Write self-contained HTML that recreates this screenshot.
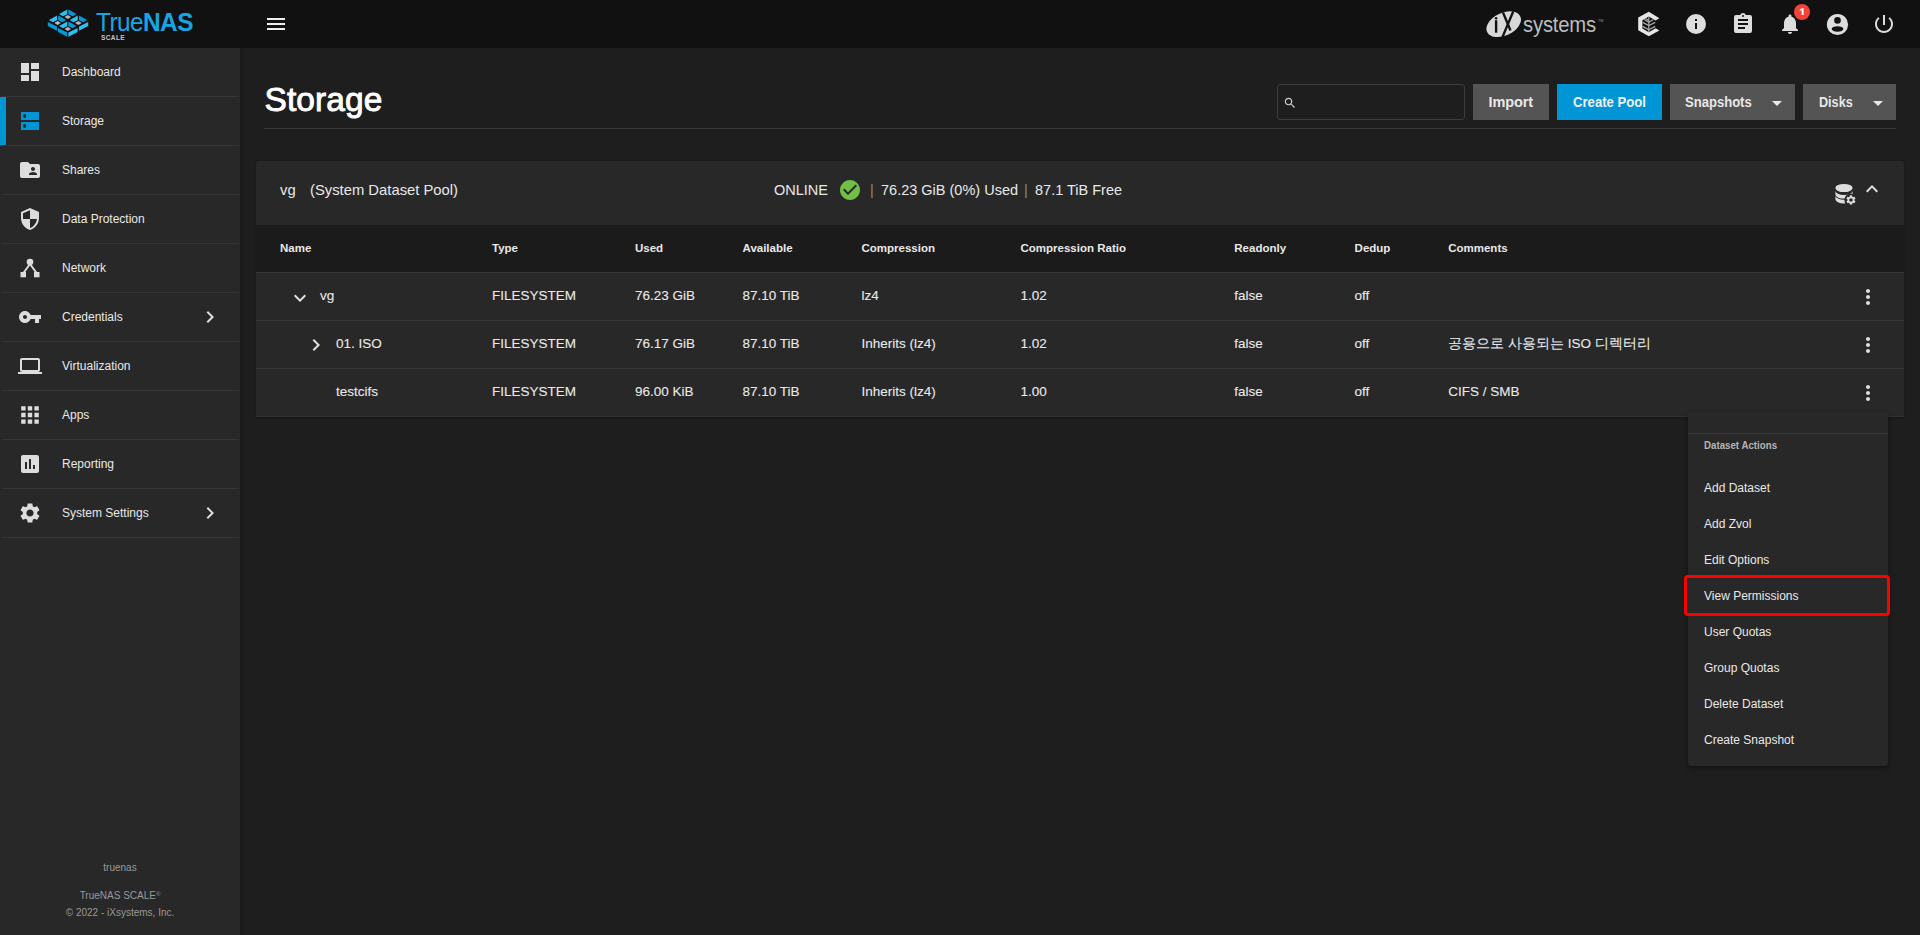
<!DOCTYPE html>
<html><head><meta charset="utf-8"><title>Storage - TrueNAS</title>
<style>
html,body{margin:0;padding:0;width:1920px;height:935px;overflow:hidden;background:#1e1e1e;font-family:"Liberation Sans",sans-serif;}
.t{position:absolute;line-height:1;white-space:nowrap;}
.r{position:absolute;}
.i{position:absolute;overflow:visible;}
</style></head><body>
<div class="r" style="left:0px;top:0px;width:1920px;height:48px;background:#111111;"></div>
<svg class="i" style="left:48px;top:9px" width="40" height="28" viewBox="0 0 40 28"><polygon points="11.10,4.90 19.20,0.60 19.20,5.20 15.00,7.20" fill="#2cbff2"/><polygon points="28.50,4.90 20.40,0.60 20.40,5.20 24.60,7.20" fill="#0598d8"/><polygon points="0.90,10.90 9.00,6.60 9.00,11.20 4.80,13.20" fill="#2cbff2"/><polygon points="18.30,10.90 10.20,6.60 10.20,11.20 14.40,13.20" fill="#0598d8"/><polygon points="-0.20,13.00 -0.20,17.10 9.00,21.80 9.00,17.60" fill="#0598d8"/><polygon points="21.70,10.90 29.80,6.60 29.80,11.20 25.60,13.20" fill="#2cbff2"/><polygon points="39.10,10.90 31.00,6.60 31.00,11.20 35.20,13.20" fill="#0598d8"/><polygon points="40.20,13.00 40.20,17.10 31.00,21.80 31.00,17.60" fill="#2cbff2"/><polygon points="11.10,16.90 19.20,12.60 19.20,17.20 15.00,19.20" fill="#2cbff2"/><polygon points="28.50,16.90 20.40,12.60 20.40,17.20 24.60,19.20" fill="#0598d8"/><polygon points="10.00,19.00 10.00,23.10 19.20,27.80 19.20,23.60" fill="#0598d8"/><polygon points="29.60,19.00 29.60,23.10 20.40,27.80 20.40,23.60" fill="#2cbff2"/><polygon points="19.8,5.9 23.1,8 19.8,10.1 16.5,8" fill="#b8b8b8"/><polygon points="9.6,11.9 12.899999999999999,14 9.6,16.1 6.3,14" fill="#b8b8b8"/><polygon points="30.4,11.9 33.699999999999996,14 30.4,16.1 27.099999999999998,14" fill="#b8b8b8"/><polygon points="19.8,17.9 23.1,20 19.8,22.1 16.5,20" fill="#b8b8b8"/></svg>
<div class="t" style="left:95.5px;top:9.27px;font-size:26.5px;color:#17a6e4;font-weight:400;letter-spacing:-0.6px;transform:scaleX(0.92);transform-origin:0 0">True<b>NAS</b></div>
<div class="t" style="left:101px;top:34.50px;font-size:6.5px;color:#c8c8c8;font-weight:700;letter-spacing:0.4px">SCALE</div>
<div class="r" style="left:267px;top:18px;width:18px;height:2px;background:#eeeeee;"></div>
<div class="r" style="left:267px;top:23px;width:18px;height:2px;background:#eeeeee;"></div>
<div class="r" style="left:267px;top:28px;width:18px;height:2px;background:#eeeeee;"></div>
<svg class="i" style="left:1684px;top:12px;" width="24" height="24" viewBox="0 0 24 24"><path fill="#dddddd" d="M13,9H11V7H13M13,17H11V11H13M12,2A10,10 0 0,0 2,12A10,10 0 0,0 12,22A10,10 0 0,0 22,12A10,10 0 0,0 12,2Z"/></svg>
<svg class="i" style="left:1731px;top:12px;" width="24" height="24" viewBox="0 0 24 24"><path fill="#dddddd" d="M17,9H7V7H17M17,13H7V11H17M14,17H7V15H14M12,3A1,1 0 0,1 13,4A1,1 0 0,1 12,5A1,1 0 0,1 11,4A1,1 0 0,1 12,3M19,3H14.82C14.4,1.84 13.3,1 12,1C10.7,1 9.6,1.84 9.18,3H5A2,2 0 0,0 3,5V19A2,2 0 0,0 5,21H19A2,2 0 0,0 21,19V5A2,2 0 0,0 19,3Z"/></svg>
<svg class="i" style="left:1778px;top:12px;" width="24" height="24" viewBox="0 0 24 24"><path fill="#dddddd" d="M12 22c1.1 0 2-.9 2-2h-4c0 1.1.89 2 2 2zm6-6v-5c0-3.07-1.64-5.64-4.5-6.32V4c0-.83-.67-1.5-1.5-1.5s-1.5.67-1.5 1.5v.68C7.63 5.36 6 7.920 6 11v5l-2 2v1h16v-1l-2-2z"/></svg>
<svg class="i" style="left:1872px;top:12px;" width="24" height="24" viewBox="0 0 24 24"><path fill="#dddddd" d="M13 3h-2v10h2V3zm4.83 2.17l-1.42 1.42C17.99 7.86 19 9.81 19 12c0 3.87-3.13 7-7 7s-7-3.130-7-7c0-2.19 1.01-4.14 2.58-5.42L6.17 5.17C4.23 6.82 3 9.26 3 12c0 4.97 4.03 9 9 9s9-4.03 9-9c0-2.74-1.23-5.18-3.17-6.83z"/></svg>
<svg class="i" style="left:1632px;top:8px" width="32" height="32" viewBox="0 0 32 32">
<path fill="#e6e6e6" d="M16.8,3.8 L27.4,10.2 L23.6,12.5 L16.8,8.4 L10.4,12.3 L10.4,20.4 L16.8,24.2 L23.6,20.2 L27.4,22.4 L16.8,28.2 L6.2,22.2 L6.2,9.6 Z"/>
<g stroke="#a8a8a8" stroke-width="1.2" fill="none">
<path d="M16.8,8.4 V24.2"/><path d="M10.6,14.4 L16.8,17.6 L23.2,14.4"/><path d="M10.6,18.4 L16.8,21.8 L23.2,18.4"/>
<path d="M12.2,11.6 L16.8,14.2 L21.4,11.6 M13.5,10.4 L16.8,12.4"/>
</g></svg>
<svg class="i" style="left:1825px;top:12px" width="24" height="24" viewBox="0 0 24 24">
<circle cx="12.5" cy="12.5" r="10.6" fill="#dddddd"/><circle cx="12.5" cy="8.4" r="3.3" fill="#111"/><ellipse cx="12.5" cy="17" rx="5.8" ry="2.7" fill="#111"/></svg>
<div class="r" style="left:1794px;top:4px;width:16px;height:16px;background:#f44336;border-radius:50%"></div>
<svg class="i" style="left:1790px;top:0px" width="25" height="24" viewBox="0 0 25 24"><path d="M11.6 8.2 H13.6 V14.9 H11.7 V10.2 L9.8 10.8 V9.4 Z" fill="#ffffff"/></svg>
<svg class="i" style="left:1484px;top:8px" width="40" height="32" viewBox="0 0 40 32">
<ellipse cx="19.7" cy="16.2" rx="18.3" ry="11.3" transform="rotate(-25 19.7 16.2)" fill="#d8d8d8"/>
<rect x="10.9" y="12.2" width="2.4" height="12.5" fill="#111"/><circle cx="12.1" cy="10.3" r="1.3" fill="#111"/>
<path d="M18.3,29.5 L29.2,3.5" stroke="#111" stroke-width="2.3"/><path d="M19,4.5 L26.5,22.5" stroke="#111" stroke-width="2.3"/>
</svg>
<div class="t" style="left:1523px;top:13.65px;font-size:22.5px;color:#bcbcbc;font-weight:400;letter-spacing:-0.2px;transform:scaleX(0.9);transform-origin:0 0">systems</div>
<div class="t" style="left:1598px;top:19.75px;font-size:3.6px;color:#999999;font-weight:400;">TM</div>
<div class="r" style="left:0px;top:48px;width:240px;height:887px;background:#282828;"></div>
<div class="r" style="left:240px;top:48px;width:3px;height:887px;background:linear-gradient(90deg,#191919,#1e1e1e);"></div>
<div class="r" style="left:2px;top:96px;width:237px;height:1px;background:#353535;"></div>
<svg class="i" style="left:18px;top:60px;" width="24" height="24" viewBox="0 0 24 24"><path fill="#dddddd" d="M3 13h8V3H3v10zm0 8h8v-6H3v6zm10 0h8V11h-8v10zm0-18v6h8V3h-8z"/></svg>
<div class="t" style="left:62px;top:65.64px;font-size:12px;color:#e8e8e8;font-weight:400;">Dashboard</div>
<div class="r" style="left:2px;top:145px;width:237px;height:1px;background:#353535;"></div>
<div class="r" style="left:21px;top:112px;width:18px;height:8px;background:#0095d5;"></div>
<div class="r" style="left:21px;top:122px;width:18px;height:8px;background:#0095d5;"></div>
<div class="r" style="left:23px;top:114.3px;width:3.4px;height:3.4px;background:#282828;border-radius:50%"></div>
<div class="r" style="left:23px;top:124.3px;width:3.4px;height:3.4px;background:#282828;border-radius:50%"></div>
<div class="t" style="left:62px;top:114.64px;font-size:12px;color:#e8e8e8;font-weight:400;">Storage</div>
<div class="r" style="left:2px;top:194px;width:237px;height:1px;background:#353535;"></div>
<svg class="i" style="left:18px;top:158px;" width="24" height="24" viewBox="0 0 24 24"><path fill="#dddddd" d="M20 6h-8l-2-2H4c-1.1 0-1.99.9-1.99 2L2 18c0 1.1.9 2 2 2h16c1.1 0 2-.9 2-2V8c0-1.1-.9-2-2-2zm-5 3c1.1 0 2 .9 2 2s-.9 2-2 2-2-.9-2-2 .9-2 2-2zm4 8h-8v-1c0-1.33 2.67-2 4-2s4 .67 4 2v1z"/></svg>
<div class="t" style="left:62px;top:163.64px;font-size:12px;color:#e8e8e8;font-weight:400;">Shares</div>
<div class="r" style="left:2px;top:243px;width:237px;height:1px;background:#353535;"></div>
<svg class="i" style="left:18px;top:207px;" width="24" height="24" viewBox="0 0 24 24"><path fill="#dddddd" d="M12 1L3 5v6c0 5.55 3.84 10.74 9 12 5.16-1.26 9-6.45 9-12V5l-9-4zm0 10.99h7c-.53 4.12-3.28 7.79-7 8.94V12H5V6.3l7-3.11v8.8z"/></svg>
<div class="t" style="left:62px;top:212.64px;font-size:12px;color:#e8e8e8;font-weight:400;">Data Protection</div>
<div class="r" style="left:2px;top:292px;width:237px;height:1px;background:#353535;"></div>
<div class="t" style="left:62px;top:261.64px;font-size:12px;color:#e8e8e8;font-weight:400;">Network</div>
<div class="r" style="left:2px;top:341px;width:237px;height:1px;background:#353535;"></div>
<svg class="i" style="left:18px;top:305px;" width="24" height="24" viewBox="0 0 24 24"><path fill="#dddddd" d="M12.65 10C11.83 7.67 9.61 6 7 6c-3.31 0-6 2.69-6 6s2.69 6 6 6c2.61 0 4.83-1.67 5.65-4H17v4h4v-4h2v-4H12.65zM7 14c-1.1 0-2-.9-2-2s.9-2 2-2 2 .9 2 2-.9 2-2 2z"/></svg>
<div class="t" style="left:62px;top:310.64px;font-size:12px;color:#e8e8e8;font-weight:400;">Credentials</div>
<svg class="i" style="left:198px;top:305px;" width="24" height="24" viewBox="0 0 24 24"><path fill="#dddddd" d="M10 6L8.59 7.41 13.17 12l-4.58 4.59L10 18l6-6z"/></svg>
<div class="r" style="left:2px;top:390px;width:237px;height:1px;background:#353535;"></div>
<svg class="i" style="left:18px;top:354px;" width="24" height="24" viewBox="0 0 24 24"><path fill="#dddddd" d="M20 18c1.1 0 1.99-.9 1.99-2L22 6c0-1.1-.9-2-2-2H4c-1.1 0-2 .9-2 2v10c0 1.1.9 2 2 2H0v2h24v-2h-4zM4 6h16v10H4V6z"/></svg>
<div class="t" style="left:62px;top:359.64px;font-size:12px;color:#e8e8e8;font-weight:400;">Virtualization</div>
<div class="r" style="left:2px;top:439px;width:237px;height:1px;background:#353535;"></div>
<svg class="i" style="left:18px;top:403px;transform:scale(1.1)" width="24" height="24" viewBox="0 0 24 24"><path fill="#dddddd" d="M4 8h4V4H4v4zm6 12h4v-4h-4v4zm-6 0h4v-4H4v4zm0-6h4v-4H4v4zm6 0h4v-4h-4v4zm6-10v4h4V4h-4zm-6 4h4V4h-4v4zm6 6h4v-4h-4v4zm0 6h4v-4h-4v4z"/></svg>
<div class="t" style="left:62px;top:408.64px;font-size:12px;color:#e8e8e8;font-weight:400;">Apps</div>
<div class="r" style="left:2px;top:488px;width:237px;height:1px;background:#353535;"></div>
<svg class="i" style="left:18px;top:452px;" width="24" height="24" viewBox="0 0 24 24"><path fill="#dddddd" d="M19 3H5c-1.1 0-2 .9-2 2v14c0 1.1.9 2 2 2h14c1.1 0 2-.9 2-2V5c0-1.1-.9-2-2-2zM9 17H7v-7h2v7zm4 0h-2V7h2v10zm4 0h-2v-4h2v4z"/></svg>
<div class="t" style="left:62px;top:457.64px;font-size:12px;color:#e8e8e8;font-weight:400;">Reporting</div>
<div class="r" style="left:2px;top:537px;width:237px;height:1px;background:#353535;"></div>
<svg class="i" style="left:18px;top:501px;" width="24" height="24" viewBox="0 0 24 24"><path fill="#dddddd" d="M19.14 12.94c.04-.3.06-.61.06-.94 0-.32-.02-.64-.07-.94l2.03-1.58c.18-.14.23-.41.12-.61l-1.92-3.32c-.12-.22-.37-.29-.59-.22l-2.39.96c-.5-.38-1.03-.7-1.62-.94l-.36-2.54c-.04-.24-.24-.41-.48-.41h-3.84c-.24 0-.43.17-.47.41l-.36 2.54c-.59.24-1.13.57-1.62.94l-2.39-.96c-.22-.08-.47 0-.59.22L2.74 8.87c-.12.21-.08.47.12.61l2.03 1.58c-.05.3-.09.63-.09.94s.02.64.07.94l-2.03 1.58c-.18.14-.23.41-.12.61l1.92 3.32c.12.22.37.29.59.22l2.39-.96c.5.38 1.030.7 1.62.94l.36 2.54c.05.24.24.41.48.41h3.84c.24 0 .44-.17.47-.41l.36-2.54c.59-.24 1.13-.56 1.62-.94l2.39.96c.22.08.47 0 .59-.22l1.92-3.32c.12-.22.07-.47-.12-.61l-2.01-1.58zM12 15.6c-1.98 0-3.6-1.62-3.6-3.6s1.62-3.6 3.6-3.6 3.6 1.62 3.6 3.6-1.62 3.6-3.6 3.6z"/></svg>
<div class="t" style="left:62px;top:506.64px;font-size:12px;color:#e8e8e8;font-weight:400;">System Settings</div>
<svg class="i" style="left:198px;top:501px;" width="24" height="24" viewBox="0 0 24 24"><path fill="#dddddd" d="M10 6L8.59 7.41 13.17 12l-4.58 4.59L10 18l6-6z"/></svg>
<div class="r" style="left:0px;top:97px;width:6px;height:48px;background:#0095d5;"></div>
<svg class="i" style="left:18px;top:256px" width="24" height="24" viewBox="0 0 24 24">
<circle cx="12" cy="6" r="3.3" fill="#dddddd"/><path d="M12 8 L5.8 16.5 M12 8 L18.2 16.5" stroke="#dddddd" stroke-width="2" fill="none"/>
<rect x="2.5" y="16" width="5.5" height="5.3" fill="#dddddd"/><rect x="16" y="16" width="5.5" height="5.3" fill="#dddddd"/></svg>
<div class="t" style="left:-80px;width:400px;text-align:center;top:863.28px;font-size:10px;color:#999999;font-weight:400;">truenas</div>
<div class="t" style="left:-80px;width:400px;text-align:center;top:890.78px;font-size:10px;color:#999999;font-weight:400;">TrueNAS SCALE<span style="font-size:6px;vertical-align:3px">&reg;</span></div>
<div class="t" style="left:-80px;width:400px;text-align:center;top:907.78px;font-size:10px;color:#999999;font-weight:400;">&copy; 2022 - iXsystems, Inc.</div>
<div class="t" style="left:264.5px;top:83.44px;font-size:33.5px;color:#ffffff;font-weight:400;-webkit-text-stroke:0.9px #ffffff;letter-spacing:0.1px">Storage</div>
<div class="r" style="left:264px;top:128px;width:1632px;height:1px;background:#3a3a3a;"></div>
<div class="r" style="left:1277px;top:84px;width:188px;height:36px;background:transparent;box-sizing:border-box;border:1px solid #3c3c3c;border-radius:3px"></div>
<svg class="i" style="left:1283px;top:96px;" width="14" height="14" viewBox="0 0 24 24"><path fill="#cccccc" d="M15.5 14h-.79l-.28-.27C15.41 12.59 16 11.11 16 9.5 16 5.91 13.09 3 9.5 3S3 5.91 3 9.5 5.91 16 9.5 16c1.61 0 3.09-.59 4.23-1.57l.27.28v.79l5 4.99L20.49 19l-4.99-5zm-6 0C7.01 14 5 11.99 5 9.5S7.01 5 9.5 5 14 7.01 14 9.5 11.99 14 9.5 14z"/></svg>
<div class="r" style="left:1473px;top:84px;width:76px;height:36px;background:#545454;"></div>
<div class="t" style="left:1488.5px;top:95.13px;font-size:14.5px;color:#e8e8e8;font-weight:700;transform:scaleX(1.0);transform-origin:0 0;letter-spacing:-0.1px">Import</div>
<div class="r" style="left:1557px;top:84px;width:105px;height:36px;background:#0095d5;"></div>
<div class="t" style="left:1573px;top:95.13px;font-size:14.5px;color:#f0f0f0;font-weight:700;transform:scaleX(0.905);transform-origin:0 0">Create Pool</div>
<div class="r" style="left:1670px;top:84px;width:125px;height:36px;background:#545454;"></div>
<div class="t" style="left:1685px;top:95.13px;font-size:14.5px;color:#e8e8e8;font-weight:700;transform:scaleX(0.9);transform-origin:0 0">Snapshots</div>
<div class="r" style="left:1803px;top:84px;width:93px;height:36px;background:#545454;"></div>
<div class="t" style="left:1819px;top:95.13px;font-size:14.5px;color:#e8e8e8;font-weight:700;transform:scaleX(0.87);transform-origin:0 0">Disks</div>
<svg class="i" style="left:1772px;top:101px" width="10" height="5" viewBox="0 0 10 5"><path d="M0 0L10 0L5 5z" fill="#e8e8e8"/></svg>
<svg class="i" style="left:1873px;top:101px" width="10" height="5" viewBox="0 0 10 5"><path d="M0 0L10 0L5 5z" fill="#e8e8e8"/></svg>
<div class="r" style="left:256px;top:161px;width:1648px;height:256px;background:#282828;border-radius:3px;box-shadow:0 1px 2px rgba(0,0,0,.35)"></div>
<div class="r" style="left:256px;top:416px;width:1648px;height:1px;background:#323232;"></div>
<div class="r" style="left:256px;top:225px;width:1648px;height:47px;background:#1b1b1b;"></div>
<div class="r" style="left:256px;top:272px;width:1648px;height:1px;background:#353535;"></div>
<div class="r" style="left:256px;top:320px;width:1648px;height:1px;background:#353535;"></div>
<div class="r" style="left:256px;top:368px;width:1648px;height:1px;background:#353535;"></div>
<div class="t" style="left:280px;top:182.67px;font-size:14.8px;color:#e8e8e8;font-weight:400;">vg</div>
<div class="t" style="left:310px;top:182.67px;font-size:14.8px;color:#e8e8e8;font-weight:400;">(System Dataset Pool)</div>
<div class="t" style="left:774px;top:182.93px;font-size:14.5px;color:#e8e8e8;font-weight:400;">ONLINE</div>
<svg class="i" style="left:837.5px;top:178px;" width="24" height="24" viewBox="0 0 24 24"><path fill="#71bf44" d="M12 2C6.5 2 2 6.5 2 12S6.5 22 12 22 22 17.5 22 12 17.5 2 12 2M10 17L5 12L6.41 10.59L10 14.17L17.59 6.58L19 8L10 17Z"/></svg>
<div class="t" style="left:870px;top:182.93px;font-size:14.5px;color:#888888;font-weight:400;">|</div>
<div class="t" style="left:881px;top:182.93px;font-size:14.5px;color:#e8e8e8;font-weight:400;">76.23 GiB (0%) Used</div>
<div class="t" style="left:1024px;top:182.93px;font-size:14.5px;color:#888888;font-weight:400;">|</div>
<div class="t" style="left:1035px;top:182.93px;font-size:14.5px;color:#e8e8e8;font-weight:400;">87.1 TiB Free</div>
<svg class="i" style="left:1831px;top:181px" width="24" height="24" viewBox="0 0 24 24">
<g fill="#dddddd"><ellipse cx="13" cy="7" rx="8.6" ry="4.1"/>
<path d="M4.4 9.9 v3.6 a8.6 4.1 0 0 0 17.2 0 v-3.6 a8.6 4.1 0 0 1 -17.2 0z"/>
<path d="M4.4 14.7 v3.6 a8.6 4.1 0 0 0 17.2 0 v-3.6 a8.6 4.1 0 0 1 -17.2 0z"/></g>
<circle cx="20" cy="19" r="6.6" fill="#282828"/>
<g transform="translate(14.2,13.2) scale(0.48)"><path fill="#dddddd" d="M19.14 12.94c.04-.3.06-.61.06-.94 0-.32-.02-.64-.07-.94l2.03-1.58c.18-.14.23-.41.12-.61l-1.92-3.32c-.12-.22-.37-.29-.59-.22l-2.39.96c-.5-.38-1.03-.7-1.62-.94l-.36-2.54c-.04-.24-.24-.41-.48-.41h-3.84c-.24 0-.43.17-.47.41l-.36 2.54c-.59.24-1.13.57-1.62.94l-2.39-.96c-.22-.08-.47 0-.59.22L2.74 8.87c-.12.21-.08.47.12.61l2.03 1.58c-.05.3-.09.63-.09.94s.02.64.07.94l-2.03 1.58c-.18.14-.23.41-.12.61l1.92 3.32c.12.22.37.29.59.22l2.39-.96c.5.38 1.030.7 1.62.94l.36 2.54c.05.24.24.41.48.41h3.84c.24 0 .44-.17.47-.41l.36-2.54c.59-.24 1.13-.56 1.62-.94l2.39.96c.22.08.47 0 .59-.22l1.92-3.32c.12-.22.07-.47-.12-.61l-2.01-1.58zM12 15.6c-1.98 0-3.6-1.62-3.6-3.6s1.62-3.6 3.6-3.6 3.6 1.62 3.6 3.6-1.62 3.6-3.6 3.6z"/></g>
</svg>
<svg class="i" style="left:1860px;top:177px;" width="24" height="24" viewBox="0 0 24 24"><path fill="#e0e0e0" d="M12 8l-6 6 1.41 1.41L12 10.83l4.59 4.58L18 14z"/></svg>
<div class="t" style="left:280px;top:243.07px;font-size:11.5px;color:#e8e8e8;font-weight:700;">Name</div>
<div class="t" style="left:492px;top:243.07px;font-size:11.5px;color:#e8e8e8;font-weight:700;">Type</div>
<div class="t" style="left:635px;top:243.07px;font-size:11.5px;color:#e8e8e8;font-weight:700;">Used</div>
<div class="t" style="left:742.5px;top:243.07px;font-size:11.5px;color:#e8e8e8;font-weight:700;">Available</div>
<div class="t" style="left:861.5px;top:243.07px;font-size:11.5px;color:#e8e8e8;font-weight:700;">Compression</div>
<div class="t" style="left:1020.5px;top:243.07px;font-size:11.5px;color:#e8e8e8;font-weight:700;">Compression Ratio</div>
<div class="t" style="left:1234.3px;top:243.07px;font-size:11.5px;color:#e8e8e8;font-weight:700;">Readonly</div>
<div class="t" style="left:1354.6px;top:243.07px;font-size:11.5px;color:#e8e8e8;font-weight:700;">Dedup</div>
<div class="t" style="left:1448.2px;top:243.07px;font-size:11.5px;color:#e8e8e8;font-weight:700;">Comments</div>
<div class="t" style="left:320px;top:289.37px;font-size:13.5px;color:#e8e8e8;font-weight:400;-webkit-text-stroke:0.1px #e8e8e8">vg</div>
<div class="t" style="left:492px;top:289.37px;font-size:13.5px;color:#e8e8e8;font-weight:400;-webkit-text-stroke:0.1px #e8e8e8">FILESYSTEM</div>
<div class="t" style="left:635px;top:289.37px;font-size:13.5px;color:#e8e8e8;font-weight:400;-webkit-text-stroke:0.1px #e8e8e8">76.23 GiB</div>
<div class="t" style="left:742.5px;top:289.37px;font-size:13.5px;color:#e8e8e8;font-weight:400;-webkit-text-stroke:0.1px #e8e8e8">87.10 TiB</div>
<div class="t" style="left:861.5px;top:289.37px;font-size:13.5px;color:#e8e8e8;font-weight:400;-webkit-text-stroke:0.1px #e8e8e8">lz4</div>
<div class="t" style="left:1020.5px;top:289.37px;font-size:13.5px;color:#e8e8e8;font-weight:400;-webkit-text-stroke:0.1px #e8e8e8">1.02</div>
<div class="t" style="left:1234.3px;top:289.37px;font-size:13.5px;color:#e8e8e8;font-weight:400;-webkit-text-stroke:0.1px #e8e8e8">false</div>
<div class="t" style="left:1354.6px;top:289.37px;font-size:13.5px;color:#e8e8e8;font-weight:400;-webkit-text-stroke:0.1px #e8e8e8">off</div>
<div class="t" style="left:1448.2px;top:289.37px;font-size:13.5px;color:#e8e8e8;font-weight:400;-webkit-text-stroke:0.1px #e8e8e8"></div>
<svg class="i" style="left:1856px;top:285px;" width="24" height="24" viewBox="0 0 24 24"><path fill="#e0e0e0" d="M12 8c1.1 0 2-.9 2-2s-.9-2-2-2-2 .9-2 2 .9 2 2 2zm0 2c-1.1 0-2 .9-2 2s.9 2 2 2 2-.9 2-2-.9-2-2-2zm0 6c-1.1 0-2 .9-2 2s.9 2 2 2 2-.9 2-2-.9-2-2-2z"/></svg>
<div class="t" style="left:336px;top:337.37px;font-size:13.5px;color:#e8e8e8;font-weight:400;-webkit-text-stroke:0.1px #e8e8e8">01. ISO</div>
<div class="t" style="left:492px;top:337.37px;font-size:13.5px;color:#e8e8e8;font-weight:400;-webkit-text-stroke:0.1px #e8e8e8">FILESYSTEM</div>
<div class="t" style="left:635px;top:337.37px;font-size:13.5px;color:#e8e8e8;font-weight:400;-webkit-text-stroke:0.1px #e8e8e8">76.17 GiB</div>
<div class="t" style="left:742.5px;top:337.37px;font-size:13.5px;color:#e8e8e8;font-weight:400;-webkit-text-stroke:0.1px #e8e8e8">87.10 TiB</div>
<div class="t" style="left:861.5px;top:337.37px;font-size:13.5px;color:#e8e8e8;font-weight:400;-webkit-text-stroke:0.1px #e8e8e8">Inherits (lz4)</div>
<div class="t" style="left:1020.5px;top:337.37px;font-size:13.5px;color:#e8e8e8;font-weight:400;-webkit-text-stroke:0.1px #e8e8e8">1.02</div>
<div class="t" style="left:1234.3px;top:337.37px;font-size:13.5px;color:#e8e8e8;font-weight:400;-webkit-text-stroke:0.1px #e8e8e8">false</div>
<div class="t" style="left:1354.6px;top:337.37px;font-size:13.5px;color:#e8e8e8;font-weight:400;-webkit-text-stroke:0.1px #e8e8e8">off</div>
<div class="t" style="left:1448.2px;top:337.37px;font-size:13.5px;color:#e8e8e8;font-weight:400;-webkit-text-stroke:0.1px #e8e8e8">공용으로 사용되는 ISO 디렉터리</div>
<svg class="i" style="left:1856px;top:333px;" width="24" height="24" viewBox="0 0 24 24"><path fill="#e0e0e0" d="M12 8c1.1 0 2-.9 2-2s-.9-2-2-2-2 .9-2 2 .9 2 2 2zm0 2c-1.1 0-2 .9-2 2s.9 2 2 2 2-.9 2-2-.9-2-2-2zm0 6c-1.1 0-2 .9-2 2s.9 2 2 2 2-.9 2-2-.9-2-2-2z"/></svg>
<div class="t" style="left:336px;top:385.37px;font-size:13.5px;color:#e8e8e8;font-weight:400;-webkit-text-stroke:0.1px #e8e8e8">testcifs</div>
<div class="t" style="left:492px;top:385.37px;font-size:13.5px;color:#e8e8e8;font-weight:400;-webkit-text-stroke:0.1px #e8e8e8">FILESYSTEM</div>
<div class="t" style="left:635px;top:385.37px;font-size:13.5px;color:#e8e8e8;font-weight:400;-webkit-text-stroke:0.1px #e8e8e8">96.00 KiB</div>
<div class="t" style="left:742.5px;top:385.37px;font-size:13.5px;color:#e8e8e8;font-weight:400;-webkit-text-stroke:0.1px #e8e8e8">87.10 TiB</div>
<div class="t" style="left:861.5px;top:385.37px;font-size:13.5px;color:#e8e8e8;font-weight:400;-webkit-text-stroke:0.1px #e8e8e8">Inherits (lz4)</div>
<div class="t" style="left:1020.5px;top:385.37px;font-size:13.5px;color:#e8e8e8;font-weight:400;-webkit-text-stroke:0.1px #e8e8e8">1.00</div>
<div class="t" style="left:1234.3px;top:385.37px;font-size:13.5px;color:#e8e8e8;font-weight:400;-webkit-text-stroke:0.1px #e8e8e8">false</div>
<div class="t" style="left:1354.6px;top:385.37px;font-size:13.5px;color:#e8e8e8;font-weight:400;-webkit-text-stroke:0.1px #e8e8e8">off</div>
<div class="t" style="left:1448.2px;top:385.37px;font-size:13.5px;color:#e8e8e8;font-weight:400;-webkit-text-stroke:0.1px #e8e8e8">CIFS / SMB</div>
<svg class="i" style="left:1856px;top:381px;" width="24" height="24" viewBox="0 0 24 24"><path fill="#e0e0e0" d="M12 8c1.1 0 2-.9 2-2s-.9-2-2-2-2 .9-2 2 .9 2 2 2zm0 2c-1.1 0-2 .9-2 2s.9 2 2 2 2-.9 2-2-.9-2-2-2zm0 6c-1.1 0-2 .9-2 2s.9 2 2 2 2-.9 2-2-.9-2-2-2z"/></svg>
<svg class="i" style="left:288px;top:286px;" width="24" height="24" viewBox="0 0 24 24"><path fill="#e0e0e0" d="M16.59 8.59L12 13.17 7.41 8.59 6 10l6 6 6-6z"/></svg>
<svg class="i" style="left:304px;top:333px;" width="24" height="24" viewBox="0 0 24 24"><path fill="#e0e0e0" d="M10 6L8.59 7.41 13.17 12l-4.58 4.59L10 18l6-6z"/></svg>
<div class="r" style="left:1688px;top:412px;width:200px;height:354px;background:#282828;border-radius:4px;box-shadow:0 2px 6px rgba(0,0,0,.4)"></div>
<div class="r" style="left:1688px;top:433px;width:200px;height:1px;background:#353535;"></div>
<div class="t" style="left:1704px;top:440.03px;font-size:11.3px;color:#b4b4b4;font-weight:700;transform:scaleX(0.86);transform-origin:0 0">Dataset Actions</div>
<div class="t" style="left:1704px;top:481.64px;font-size:12px;color:#e8e8e8;font-weight:400;">Add Dataset</div>
<div class="t" style="left:1704px;top:517.64px;font-size:12px;color:#e8e8e8;font-weight:400;">Add Zvol</div>
<div class="t" style="left:1704px;top:553.64px;font-size:12px;color:#e8e8e8;font-weight:400;">Edit Options</div>
<div class="t" style="left:1704px;top:589.64px;font-size:12px;color:#e8e8e8;font-weight:400;">View Permissions</div>
<div class="t" style="left:1704px;top:625.64px;font-size:12px;color:#e8e8e8;font-weight:400;">User Quotas</div>
<div class="t" style="left:1704px;top:661.64px;font-size:12px;color:#e8e8e8;font-weight:400;">Group Quotas</div>
<div class="t" style="left:1704px;top:697.64px;font-size:12px;color:#e8e8e8;font-weight:400;">Delete Dataset</div>
<div class="t" style="left:1704px;top:733.64px;font-size:12px;color:#e8e8e8;font-weight:400;">Create Snapshot</div>
<div class="r" style="left:1684px;top:575px;width:206px;height:41px;background:transparent;box-sizing:border-box;border:3px solid #ff0000;border-radius:4px"></div>
</body></html>
